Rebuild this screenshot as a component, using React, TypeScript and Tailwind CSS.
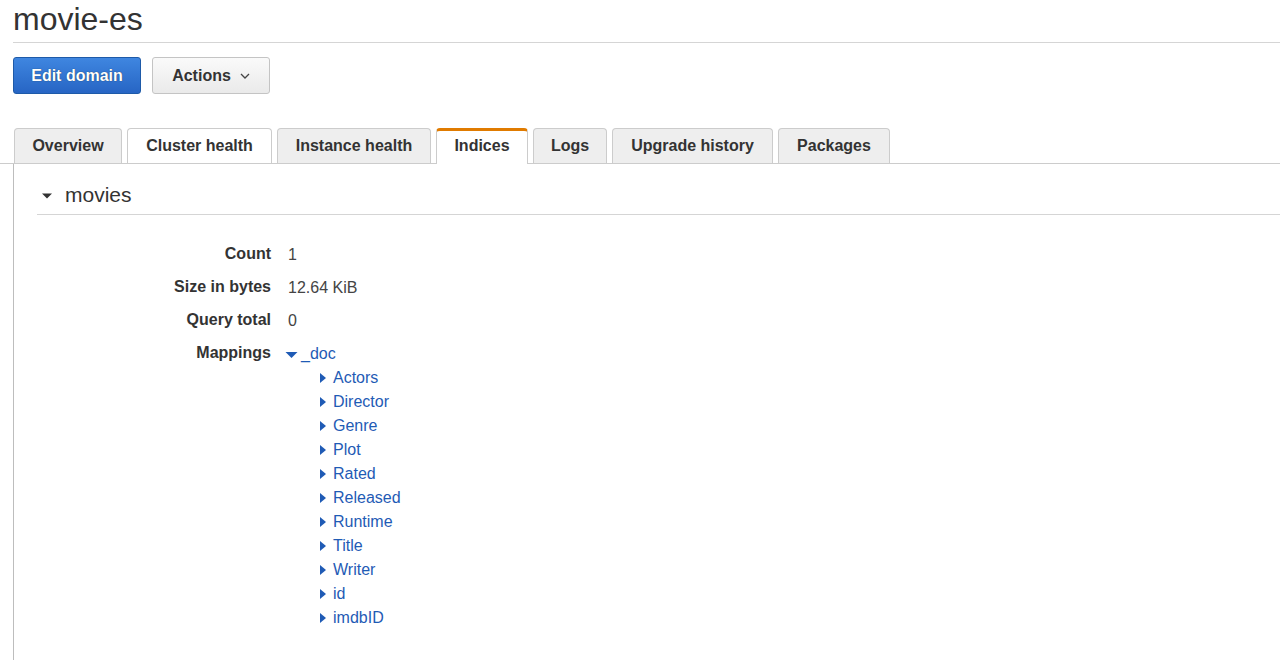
import React from "react";

const tabs: [string, string][] = [
  ["Overview", "w-[108px]"],
  ["Cluster health", "w-[145px]"],
  ["Instance health", "w-[154px]"],
  ["Indices", "w-[92px]"],
  ["Logs", "w-[74px]"],
  ["Upgrade history", "w-[161px]"],
  ["Packages", "w-[112px]"],
];
const fields = ["Actors", "Director", "Genre", "Plot", "Rated", "Released", "Runtime", "Title", "Writer", "id", "imdbID"];

function Right() {
  return (
    <svg width="8" height="14" viewBox="0 0 8 14" className="shrink-0">
      <path d="M1 2 L7 7 L1 12 Z" fill="#1f5bb5" />
    </svg>
  );
}

export default function App() {
  return (
    <div className="w-[1280px] h-[660px] overflow-hidden bg-white text-[#333]" style={{ fontFamily: '"Liberation Sans", Arial, sans-serif' }}>
      <div className="pl-[13px]">
        <h1 className="text-[32px] leading-[36px] pt-[1px] text-[#333] font-normal">movie-es</h1>
        <div className="mt-[5px] h-px bg-[#d5d5d5]" />
        <div className="flex gap-[11px] mt-[14px]">
          <button className="w-[128px] h-[37px] rounded-[3px] border border-[#1e5aa8] text-white font-bold text-[16px] bg-gradient-to-b from-[#3f86e0] to-[#2765c4] [text-shadow:0_0_1px_#134]">
            Edit domain
          </button>
          <button className="w-[118px] h-[37px] rounded-[3px] border border-[#c4c4c4] text-[#333] font-bold text-[16px] bg-gradient-to-b from-[#fafafa] to-[#eaeaea] flex items-center justify-center gap-[9px]">
            Actions
            <svg width="10" height="6" viewBox="0 0 10 6"><path d="M1 1 L5 5 L9 1" fill="none" stroke="#444" strokeWidth="1.3" /></svg>
          </button>
        </div>
      </div>

      <div className="mt-[34px] pl-[14px] flex items-end gap-[5px] border-b border-[#ccc] h-[36px]">
        {tabs.map(([t, w]) => {
          const active = t === "Indices";
          const base = "justify-center flex items-center rounded-t-[4px] text-[16px] font-bold text-[#333] " + w;
          return (
            <div
              key={t}
              className={
                active
                  ? base + " h-[36px] -mb-px bg-white border-x border-[#ccc] border-t-[3px] border-t-[#e07b00] pb-[3px]"
                  : t === "Cluster health"
                  ? base + " h-[35px] bg-white border border-b-0 border-[#ccc]"
                  : base + " h-[35px] bg-[#eeeeee] border border-b-0 border-[#ccc]"
              }
            >
              {t}
            </div>
          );
        })}
      </div>

      <div className="ml-[13px] border-l border-[#bdbdbd] h-[500px] pl-[23px]">
        <div className="flex items-end h-[51px] border-b border-[#d5d5d5] pl-[4px] pb-[7px]">
          <svg width="12" height="8" viewBox="0 0 12 8" className="mr-[12px] mb-[7px]"><path d="M1 1.5 L11 1.5 L6 6.5 Z" fill="#333" /></svg>
          <span className="text-[21px] leading-[24px] text-[#333]">movies</span>
        </div>

        <div className="mt-[27px] grid grid-cols-[234px_1fr] gap-x-[17px] text-[16px]">
          <div className="text-right font-bold text-[#333] h-[33px] leading-[24px]">Count</div>
          <div className="text-[#444] h-[33px] leading-[26px]">1</div>
          <div className="text-right font-bold text-[#333] h-[33px] leading-[24px]">Size in bytes</div>
          <div className="text-[#444] h-[33px] leading-[26px]">12.64 KiB</div>
          <div className="text-right font-bold text-[#333] h-[33px] leading-[24px]">Query total</div>
          <div className="text-[#444] h-[33px] leading-[26px]">0</div>
          <div className="text-right font-bold text-[#333] leading-[24px]">Mappings</div>
          <div className="leading-[24px] text-[#1f5bb5]">
            <div className="flex items-center -ml-[3px] h-[24px] pt-[1px]">
              <svg width="13" height="8" viewBox="0 0 13 8" className="mr-[3px] mt-[2px]"><path d="M0.5 1 L12.5 1 L6.5 7 Z" fill="#1f5bb5" /></svg>
              <span>_doc</span>
            </div>
            <div className="pl-[31px]">
              {fields.map((f) => (
                <div key={f} className="flex items-center gap-[6px] h-[24px] pt-[1px]">
                  <Right />
                  <span>{f}</span>
                </div>
              ))}
            </div>
          </div>
        </div>
      </div>
    </div>
  );
}
